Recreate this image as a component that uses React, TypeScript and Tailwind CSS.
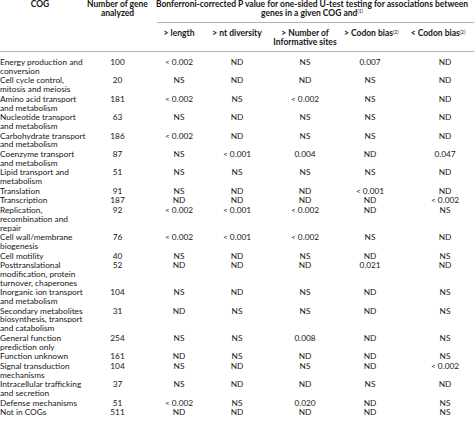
import React from 'react'

type Row = [string[], string, string, string, string, string, string]

const rows: Row[] = [
  [['Energy production and', 'conversion'], '100', '< 0.002', 'ND', 'NS', '0.007', 'ND'],
  [['Cell cycle control,', 'mitosis and meiosis'], '20', 'NS', 'ND', 'ND', 'NS', 'ND'],
  [['Amino acid transport', 'and metabolism'], '181', '< 0.002', 'NS', '< 0.002', 'NS', 'ND'],
  [['Nucleotide transport', 'and metabolism'], '63', 'NS', 'ND', 'NS', 'NS', 'ND'],
  [['Carbohydrate transport', 'and metabolism'], '186', '< 0.002', 'ND', 'NS', 'NS', 'ND'],
  [['Coenzyme transport', 'and metabolism'], '87', 'NS', '< 0.001', '0.004', 'ND', '0.047'],
  [['Lipid transport and', 'metabolism'], '51', 'NS', 'NS', 'NS', 'NS', 'ND'],
  [['Translation'], '91', 'NS', 'ND', 'ND', '< 0.001', 'ND'],
  [['Transcription'], '187', 'ND', 'ND', 'ND', 'ND', '< 0.002'],
  [['Replication,', 'recombination and', 'repair'], '92', '< 0.002', '< 0.001', '< 0.002', 'ND', 'NS'],
  [['Cell wall/membrane', 'biogenesis'], '76', '< 0.002', '< 0.001', '< 0.002', 'NS', 'ND'],
  [['Cell motility'], '40', 'NS', 'ND', 'NS', 'ND', 'NS'],
  [['Posttranslational', 'modification, protein', 'turnover, chaperones'], '52', 'ND', 'ND', 'ND', '0.021', 'ND'],
  [['Inorganic ion transport', 'and metabolism'], '104', 'NS', 'ND', 'NS', 'ND', 'NS'],
  [['Secondary metabolites', 'biosynthesis, transport', 'and catabolism'], '31', 'ND', 'NS', 'NS', 'ND', 'NS'],
  [['General function', 'prediction only'], '254', 'NS', 'NS', '0.008', 'ND', 'NS'],
  [['Function unknown'], '161', 'ND', 'NS', 'ND', 'ND', 'NS'],
  [['Signal transduction', 'mechanisms'], '104', 'NS', 'ND', 'NS', 'ND', '< 0.002'],
  [['Intracellular trafficking', 'and secretion'], '37', 'NS', 'ND', 'ND', 'NS', 'ND'],
  [['Defense mechanisms'], '51', '< 0.002', 'NS', '0.020', 'ND', 'NS'],
  [['Not in COGs'], '511', 'ND', 'ND', 'ND', 'ND', 'NS'],
]

const valueCols = ['w-[65px]', 'w-[58px]', 'w-[58px]', 'w-[78px]', 'w-[52px]', 'w-[78px] pl-[20px]']

function Sup({ n }: { n: number }) {
  return <span className="relative -top-[2.5px] text-[5px] font-normal">({n})</span>
}

export default function App() {
  return (
    <div
      className="h-[427px] w-[474px] overflow-hidden bg-white text-[8.3px] text-[#161616]"
      style={{ fontFamily: 'Lato, "Open Sans", sans-serif' }}
    >
      <div className="flex h-[52px] border-b-[1.5px] border-[#b3b3b3] text-[8.5px] font-bold leading-[8.5px]">
        <div className="w-[85px] pr-[5px] text-center">COG</div>
        <div className="w-[65px] text-center whitespace-nowrap">
          Number of gene
          <br />
          analyzed
        </div>
        <div className="flex-1">
          <div className="ml-[7px] h-[23px] border-b-[1.5px] border-[#b3b3b3]">
            <div className="-ml-[7px] text-center whitespace-nowrap">
              Bonferroni-corrected P value for one-sided U-test testing for associations between
              <br />
              genes in a given COG and<Sup n={1} />
            </div>
          </div>
          <div className="flex pt-[6px] leading-[8.5px]">
            <div className="w-[58px] text-center">&gt; length</div>
            <div className="w-[58px] text-center whitespace-nowrap">&gt; nt diversity</div>
            <div className="w-[78px] text-center whitespace-nowrap">
              &gt; Number of
              <br />
              Informative sites
            </div>
            <div className="w-[52px] text-center whitespace-nowrap">
              &gt; Codon bias<Sup n={2} />
            </div>
            <div className="w-[78px] pl-[6px] text-center whitespace-nowrap">
              &lt; Codon bias<Sup n={2} />
            </div>
          </div>
        </div>
      </div>

      <div className="pt-[6px] leading-[8.75px]">
        {rows.map((r) => (
          <div key={r[0][0]} className="flex pb-[0.9px]">
            <div className="w-[85px] whitespace-nowrap">
              {r[0].map((line) => (
                <div key={line}>{line}</div>
              ))}
            </div>
            {r.slice(1).map((v, i) => (
              <div key={i} className={`${valueCols[i]} text-center`}>
                {v}
              </div>
            ))}
          </div>
        ))}
      </div>
    </div>
  )
}
